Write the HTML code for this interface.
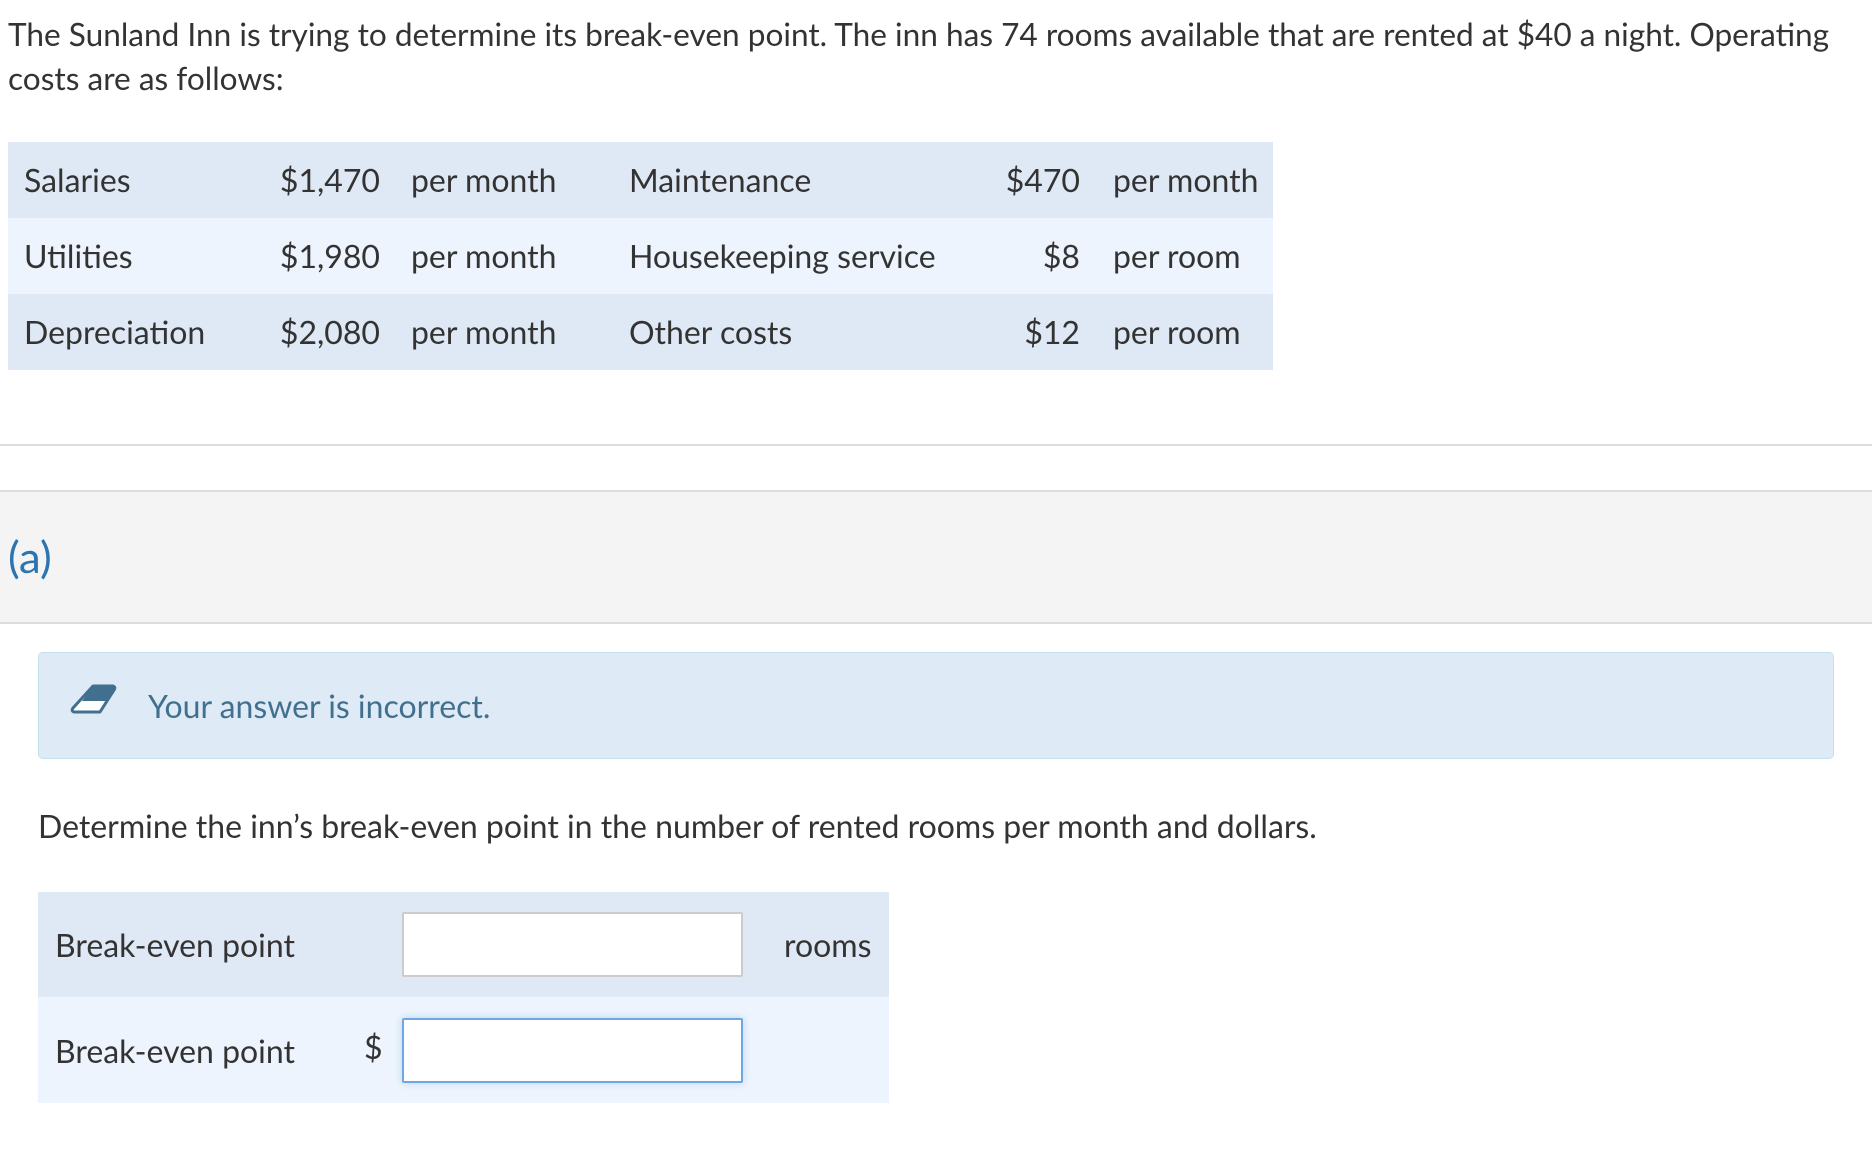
<!DOCTYPE html>
<html><head><meta charset="utf-8"><style>
body{margin:0;width:1872px;height:1156px;background:#fff;position:relative;font-family:"Lato","Liberation Sans",sans-serif;color:#333;overflow:hidden}
.a{position:absolute;white-space:nowrap}
.t{font-size:32px;line-height:34px}
</style></head><body>
<div class="a" style="left:8px;top:12px;font-size:31.6px;line-height:44px;color:#333">The Sunland Inn is trying to determine its break-even point. The inn has 74 rooms available that are rented at $40 a night. Operating<br>costs are as follows:</div>

<div class="a" style="left:8px;top:142px;width:1265px;height:76px;background:#dfe9f5"></div>
<div class="a" style="left:8px;top:218px;width:1265px;height:76px;background:#edf4fd"></div>
<div class="a" style="left:8px;top:294px;width:1265px;height:76px;background:#dfe9f5"></div>

<div class="a t" style="left:24px;top:163px">Salaries</div>
<div class="a t" style="right:1492px;top:163px">$1,470</div>
<div class="a t" style="left:411px;top:163px">per month</div>
<div class="a t" style="left:629px;top:163px">Maintenance</div>
<div class="a t" style="right:792px;top:163px">$470</div>
<div class="a t" style="left:1113px;top:163px">per month</div>

<div class="a t" style="left:24px;top:239px">Utilities</div>
<div class="a t" style="right:1492px;top:239px">$1,980</div>
<div class="a t" style="left:411px;top:239px">per month</div>
<div class="a t" style="left:629px;top:239px">Housekeeping service</div>
<div class="a t" style="right:792px;top:239px">$8</div>
<div class="a t" style="left:1113px;top:239px">per room</div>

<div class="a t" style="left:24px;top:315px">Depreciation</div>
<div class="a t" style="right:1492px;top:315px">$2,080</div>
<div class="a t" style="left:411px;top:315px">per month</div>
<div class="a t" style="left:629px;top:315px">Other costs</div>
<div class="a t" style="right:792px;top:315px">$12</div>
<div class="a t" style="left:1113px;top:315px">per room</div>

<div class="a" style="left:0;top:444px;width:1872px;height:2px;background:#ddd"></div>
<div class="a" style="left:0;top:490px;width:1872px;height:130px;background:#f4f4f4;border-top:2px solid #ddd;border-bottom:2px solid #ddd"></div>
<div class="a" style="left:8px;top:533px;font-size:44px;line-height:48px;color:#2e75b0">(a)</div>

<div class="a" style="left:38px;top:652px;width:1794px;height:105px;background:#deebf6;border:1px solid #c4e2ee;border-radius:5px"></div>
<svg class="a" style="left:69px;top:684px" width="48" height="32" viewBox="0 0 48 32"><path d="M24 2 L44 2 Q47 3 45 6 L31 28 L5 28 Q2 27 4 24 Z" fill="#fff" stroke="#41708f" stroke-width="3" stroke-linejoin="round"/><path d="M24 2 L44 2 Q47 3 45 6 L38 17 L13 17 Z" fill="#41708f"/></svg>
<div class="a" style="left:148px;top:688px;font-size:32px;line-height:36px;color:#41708f">Your answer is incorrect.</div>

<div class="a" style="left:38px;top:809px;font-size:32px;line-height:34px">Determine the inn’s break-even point in the number of rented rooms per month and dollars.</div>

<div class="a" style="left:38px;top:892px;width:851px;height:105px;background:#dfe9f5"></div>
<div class="a" style="left:38px;top:997px;width:851px;height:106px;background:#edf4fd"></div>
<div class="a t" style="left:55px;top:928px">Break-even point</div>
<div class="a" style="left:402px;top:912px;width:337px;height:61px;background:#fff;border:2px solid #ccc;border-radius:2px"></div>
<div class="a t" style="left:784px;top:928px">rooms</div>
<div class="a t" style="left:55px;top:1034px">Break-even point</div>
<div class="a t" style="left:364px;top:1030px">$</div>
<div class="a" style="left:402px;top:1018px;width:337px;height:61px;background:#fff;border:2px solid #6fa7e0;border-radius:2px;box-shadow:0 0 8px rgba(111,167,224,.4)"></div>
</body></html>
